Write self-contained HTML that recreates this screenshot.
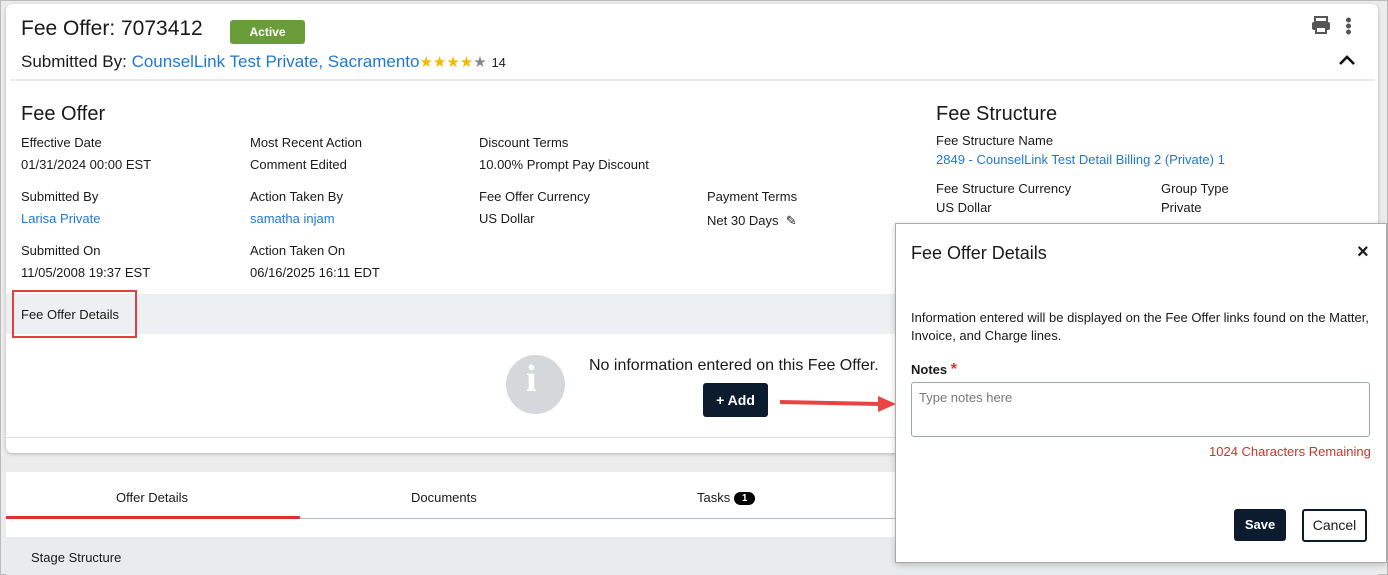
<!DOCTYPE html>
<html><head><style>
*{box-sizing:border-box;margin:0;padding:0}
body{width:1388px;height:575px;overflow:hidden;background:#ececec;font-family:"Liberation Sans",sans-serif;color:#1a1a1a;position:relative;font-size:13px}
.a{position:absolute;white-space:nowrap}
.l{color:#1f78d1}
.lab{font-size:13px;color:#1a1a1a}
.val{font-size:13px;color:#1a1a1a}
</style></head><body>
<div class="a" style="left:0;top:0;width:1388px;height:575px;border:1px solid #bbb"></div>
<div class="a" style="left:6px;top:4px;width:1372px;height:449px;background:#fff;border-radius:6px;box-shadow:0 1px 3px rgba(0,0,0,.25)"></div>
<div class="a" style="left:21px;top:17px;font-size:21px">Fee Offer: 7073412</div>
<div class="a" style="left:230px;top:20px;width:75px;height:24px;background:#6a9c3a;border-radius:3px;color:#fff;font-size:12px;font-weight:bold;text-align:center;line-height:24px">Active</div>
<div class="a" style="left:21px;top:52px;font-size:17px">Submitted By: <span class="l">CounselLink Test Private, Sacramento</span><span style="color:#f5b800;font-size:15px">★★★★</span><span style="color:#888;font-size:15px">★</span> <span style="font-size:13px">14</span></div>
<svg class="a" style="left:1311px;top:16px" width="20" height="18" viewBox="0 0 20 18"><rect x="4" y="1" width="12" height="5" fill="none" stroke="#555" stroke-width="2"/><rect x="1" y="6" width="18" height="8" rx="2" fill="#555"/><rect x="5" y="11" width="10" height="6" fill="#fff" stroke="#555" stroke-width="2"/></svg>
<div class="a" style="left:1346px;top:17px;width:5px;height:18px;background:radial-gradient(circle,#555 2.3px,transparent 2.6px) 0 0/5px 6px"></div>
<svg class="a" style="left:1338px;top:54px" width="18" height="12"><path d="M2 10 L9 3 L16 10" fill="none" stroke="#111" stroke-width="2.6"/></svg>
<div class="a" style="left:10px;top:79px;width:1365px;height:2px;background:#eaeaea"></div>
<div class="a" style="left:21px;top:103px;font-size:20px">Fee Offer</div>
<div class="a lab" style="left:21px;top:135px">Effective Date</div><div class="a val" style="left:21px;top:157px">01/31/2024 00:00 EST</div>
<div class="a lab" style="left:250px;top:135px">Most Recent Action</div><div class="a val" style="left:250px;top:157px">Comment Edited</div>
<div class="a lab" style="left:479px;top:135px">Discount Terms</div><div class="a val" style="left:479px;top:157px">10.00% Prompt Pay Discount</div>
<div class="a lab" style="left:21px;top:189px">Submitted By</div><div class="a l" style="left:21px;top:211px">Larisa Private</div>
<div class="a lab" style="left:250px;top:189px">Action Taken By</div><div class="a l" style="left:250px;top:211px">samatha injam</div>
<div class="a lab" style="left:479px;top:189px">Fee Offer Currency</div><div class="a val" style="left:479px;top:211px">US Dollar</div>
<div class="a lab" style="left:707px;top:189px">Payment Terms</div><div class="a val" style="left:707px;top:213px">Net 30 Days &nbsp;✎</div>
<div class="a lab" style="left:21px;top:243px">Submitted On</div><div class="a val" style="left:21px;top:265px">11/05/2008 19:37 EST</div>
<div class="a lab" style="left:250px;top:243px">Action Taken On</div><div class="a val" style="left:250px;top:265px">06/16/2025 16:11 EDT</div>
<div class="a" style="left:936px;top:103px;font-size:20px">Fee Structure</div>
<div class="a lab" style="left:936px;top:133px">Fee Structure Name</div><div class="a l" style="left:936px;top:152px">2849 - CounselLink Test Detail Billing 2 (Private) 1</div>
<div class="a lab" style="left:936px;top:181px">Fee Structure Currency</div><div class="a val" style="left:936px;top:200px">US Dollar</div>
<div class="a lab" style="left:1161px;top:181px">Group Type</div><div class="a val" style="left:1161px;top:200px">Private</div>
<div class="a" style="left:6px;top:294px;width:1372px;height:40px;background:#edf0f2"></div>
<div class="a" style="left:12px;top:290px;width:125px;height:48px;border:2px solid #e04040"></div>
<div class="a" style="left:21px;top:307px;font-size:13px">Fee Offer Details</div>
<div class="a" style="left:506px;top:355px;width:59px;height:59px;border-radius:50%;background:#d5d8da"></div>
<div class="a" style="left:526px;top:357px;color:#fff;font-size:38px;font-weight:bold;font-family:'Liberation Serif',serif">i</div>
<div class="a" style="left:589px;top:357px;font-size:16px">No information entered on this Fee Offer.</div>
<div class="a" style="left:703px;top:383px;width:65px;height:34px;background:#0d1b2e;border-radius:3px;color:#fff;font-weight:bold;font-size:14px;text-align:center;line-height:34px">+ Add</div>
<svg class="a" style="left:778px;top:392px" width="120" height="22"><path d="M2 10 L102 12" stroke="#e84444" stroke-width="4"/><path d="M100 4 L118 12 L100 20Z" fill="#e84444"/></svg>
<div class="a" style="left:6px;top:437px;width:900px;height:1px;background:#ddd"></div>
<div class="a" style="left:6px;top:472px;width:1372px;height:103px;background:#fff"></div>
<div class="a" style="left:116px;top:490px">Offer Details</div>
<div class="a" style="left:411px;top:490px">Documents</div>
<div class="a" style="left:697px;top:490px">Tasks <span style="display:inline-block;background:#000;color:#fff;border-radius:8px;font-size:10px;font-weight:bold;padding:1px 8px;vertical-align:1px">1</span></div>
<div class="a" style="left:6px;top:516px;width:294px;height:3px;background:#e03030"></div>
<div class="a" style="left:300px;top:518px;width:1078px;height:1px;background:#b8c2cc"></div>
<div class="a" style="left:6px;top:537px;width:1372px;height:38px;background:#e9ecef"></div>
<div class="a" style="left:31px;top:550px">Stage Structure</div>
<div class="a" style="left:895px;top:223px;width:492px;height:340px;background:#fff;border:1px solid #aaa;box-shadow:0 2px 6px rgba(0,0,0,.2)"></div>
<div class="a" style="left:911px;top:243px;font-size:18px">Fee Offer Details</div>
<div class="a" style="left:1357px;top:241px;font-size:20px;font-weight:bold">×</div>
<div class="a" style="left:911px;top:309px;line-height:18px">Information entered will be displayed on the Fee Offer links found on the Matter,<br>Invoice, and Charge lines.</div>
<div class="a" style="left:911px;top:361px;font-weight:bold">Notes <span style="color:#d33;font-size:16px">*</span></div>
<div class="a" style="left:911px;top:382px;width:459px;height:55px;border:1px solid #9aa5b1;border-radius:3px"></div>
<div class="a" style="left:919px;top:390px;color:#777">Type notes here</div>
<div class="a" style="left:1209px;top:444px;color:#c0392b">1024 Characters Remaining</div>
<div class="a" style="left:1234px;top:509px;width:52px;height:32px;background:#0d1b2e;border-radius:3px;color:#fff;font-weight:bold;text-align:center;line-height:32px">Save</div>
<div class="a" style="left:1302px;top:509px;width:65px;height:33px;border:2px solid #0d1b2e;border-radius:3px;text-align:center;line-height:29px;font-size:14px">Cancel</div>
</body></html>
